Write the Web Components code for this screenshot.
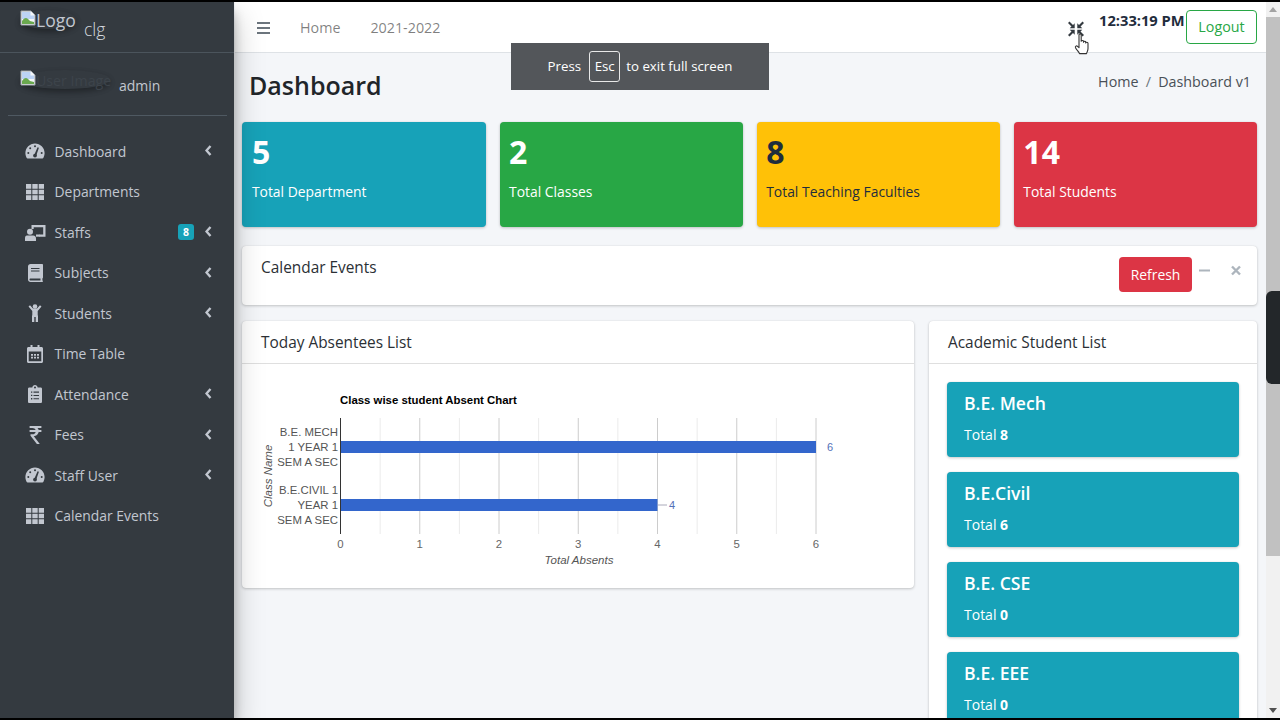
<!DOCTYPE html>
<html>
<head>
<meta charset="utf-8">
<title>Dashboard</title>
<style>
    html, body { margin: 0; height: 100%; background: #000; overflow: hidden; }
    body { font-family: "Open Sans", "Noto Sans", sans-serif; font-size: 13.9px; color: #212529; }
</style>
</head>
<body>
<admin-app>
    <side-bar slot="side">
        <nav-item icon="gauge" arrow>Dashboard</nav-item>
        <nav-item icon="grid">Departments</nav-item>
        <nav-item icon="teacher" badge="8" arrow>Staffs</nav-item>
        <nav-item icon="book" arrow>Subjects</nav-item>
        <nav-item icon="child" arrow>Students</nav-item>
        <nav-item icon="calendar">Time Table</nav-item>
        <nav-item icon="clipboard" arrow>Attendance</nav-item>
        <nav-item icon="rupee" arrow>Fees</nav-item>
        <nav-item icon="gauge" arrow>Staff User</nav-item>
        <nav-item icon="grid">Calendar Events</nav-item>
    </side-bar>

    <top-bar slot="top"></top-bar>
    <page-title slot="top"></page-title>

    <stat-row>
        <small-box value="5" color="#17a2b8">Total Department</small-box>
        <small-box value="2" color="#28a745">Total Classes</small-box>
        <small-box value="8" color="#ffc107" ink="#1f2d3d">Total Teaching Faculties</small-box>
        <small-box value="14" color="#dc3545">Total Students</small-box>
    </stat-row>

    <events-card></events-card>

    <two-cols>
        <card-box heading="Today Absentees List"><absent-chart></absent-chart></card-box>
        <card-box heading="Academic Student List" pad>
            <class-tile total="8">B.E. Mech</class-tile>
            <class-tile total="6">B.E.Civil</class-tile>
            <class-tile total="0">B.E. CSE</class-tile>
            <class-tile total="0">B.E. EEE</class-tile>
        </card-box>
    </two-cols>
</admin-app>

<script>
// broken image glyph the browser draws for the missing logo and user picture
const BROKEN_IMG = `<svg width="16" height="16" viewBox="0 0 16 16">
    <path d="M1 1h10l4 4v10H1z" fill="#f4f6f8" stroke="#9aa0a6" stroke-width="1"/>
    <path d="M2 2h8.5v3.5H14V9L2 9z" fill="#bcd3f5"/>
    <path d="M2 14V11c2-3 4-4 6-2l2 2 4 1v2z" fill="#6aa84f"/>
</svg>`;

const NAV_ICONS = {
    gauge: `<svg width="20" height="18" viewBox="0 0 20 18">
        <path fill="currentColor" d="M10 1.5C4.7 1.5.4 5.8.4 11.1c0 1.8.5 3.4 1.3 4.8.2.3.5.5.8.5h15c.3 0 .6-.2.8-.5.8-1.4 1.3-3 1.3-4.8C19.6 5.8 15.3 1.5 10 1.5z"/>
        <g fill="#343a40"><circle cx="10" cy="4.2" r="1"/><circle cx="5.2" cy="6.2" r="1"/><circle cx="3.3" cy="11" r="1"/><circle cx="16.7" cy="11" r="1"/><circle cx="10" cy="13.6" r="1.9"/><path d="M9.3 12.8 12.6 5.3l1.3.5-2.6 7.7z"/></g>
    </svg>`,
    grid: `<svg width="18" height="16" viewBox="0 0 18 16"><path fill="currentColor" d="M0 0h5.3v4.7H0zM6.3 0h5.4v4.7H6.3zM12.7 0H18v4.7h-5.3zM0 5.7h5.3v4.6H0zM6.3 5.7h5.4v4.6H6.3zM12.7 5.7H18v4.6h-5.3zM0 11.3h5.3V16H0zM6.3 11.3h5.400V16H6.3zM12.7 11.3H18V16h-5.3z"/></svg>`,
    teacher: `<svg width="21" height="17" viewBox="0 0 21 17"><path fill="currentColor" d="M6.5 1H20.5v11.7H14v-2.2h4.2V3.2H8.7v1.8H6.5z"/><path fill="currentColor" d="M11 10.500h3.500v2.200H11z"/><circle fill="currentColor" cx="5" cy="7.800" r="3"/><path fill="currentColor" d="M1.800 11.500h6.500c1.500 0 2.700 1.200 2.700 2.700V17H0v-3c0-1.200.8-2.500 1.800-2.500z"/></svg>`,
    book: `<svg width="15" height="18" viewBox="0 0 15 18"><path fill="currentColor" fill-rule="evenodd" d="M2.500 0H14c.6 0 1 .4 1 1v12.500c0 .5-.3.800-.6 1v1.900c.4.100.6.500.6.800 0 .4-.4.800-.8.800H2.500C1.100 18 0 16.900 0 15.500v-13C0 1.100 1.100 0 2.500 0zM3 4v1h8.500V4zm0 2.500v1h8.500v-1zM2.500 14.500c-.6 0-1 .4-1 1s.4 1 1 1h10v-2z"/></svg>`,
    child: `<svg width="14" height="18" viewBox="0 0 14 18"><circle fill="currentColor" cx="7" cy="2.500" r="2.300"/><path fill="currentColor" d="M.5 2.500 2 1.300l3 3.200h4L12 1.300l1.500 1.200L9.700 7v4.500h.3V18H7.700v-5H6.300v5H4v-6.500h.3V7z"/></svg>`,
    calendar: `<svg width="16" height="18" viewBox="0 0 16 18"><path fill="currentColor" fill-rule="evenodd" d="M3.500 0h2v2h5V0h2v2h2c.800 0 1.500.700 1.500 1.500v13c0 .8-.7 1.500-1.500 1.500h-13C.7 18 0 17.300 0 16.500v-13C0 2.700.7 2 1.500 2h2zM1.700 6.500v9.700h12.600V6.500zM4 9h2v1.700H4zm3 0h2v1.700H7zm3 0h2v1.700h-2zM4 11.800h2v1.700H4zm3 0h2v1.700H7zm3 0h2v1.700h-2z"/></svg>`,
    clipboard: `<svg width="14" height="18" viewBox="0 0 14 18"><path fill="currentColor" fill-rule="evenodd" d="M1.300 2.400h3C4.500 1.100 5.600 0 7 0s2.500 1.100 2.700 2.400h3c.7 0 1.300.6 1.300 1.300v13c0 .7-.6 1.300-1.300 1.300H1.300C.6 18 0 17.400 0 16.700v-13c0-.7.6-1.300 1.300-1.300zM3 6.500v1.300h1.300V6.500zm2.500.1v1.100H11V6.600zM3 9.800v1.300h1.300V9.800zm2.500.1V11H11V9.900zM3 13.100v1.300h1.300v-1.300zm2.500.1v1.100H11v-1.100zM7 1.400a1 1 0 1 0 0 2 1 1 0 0 0 0-2z"/></svg>`,
    rupee: `<svg width="13" height="18" viewBox="0 0 13 18"><path fill="currentColor" d="M.6 0h11.800v2H8.500c.6.600 1 1.300 1.200 2h2.700v2H9.700c-.5 2.300-2.400 4-4.900 4.300L10.800 18H7.900L1.500 9.700V8.300h2c1.500 0 2.700-.9 3.200-2.300H.6V4h6.100C6.200 2.700 5 2 3.500 2H.6z"/></svg>`
};

class AdminApp extends HTMLElement {
    constructor() {
        super();
        this.attachShadow({ mode: 'open' });
        this.shadowRoot.innerHTML = `
            <style>
                :host {
                    display: grid;
                    grid-template-columns: 235px 1fr 14px;
                    height: 716px;
                    margin: 2px 0;
                    position: relative;
                    background: #f4f6f9;
                    overflow: hidden;
                }
                main { overflow: hidden; min-width: 0; display: flex; flex-direction: column; }
                #content { padding: 0 9px 0 7px; }
            </style>
            <slot name="side"></slot>
            <main>
                <slot name="top"></slot>
                <div id="content"><slot></slot></div>
            </main>
            <fake-scrollbar></fake-scrollbar>
            <fullscreen-toast></fullscreen-toast>
            <hand-cursor></hand-cursor>
        `;
    }
}

class SideBar extends HTMLElement {
    constructor() {
        super();
        this.attachShadow({ mode: 'open' });
        this.shadowRoot.innerHTML = `
            <style>
                :host {
                    display: block;
                    background: #343a40;
                    width: 234px;
                    color: #c2c7d0;
                    box-shadow: 0 14px 28px rgba(0,0,0,.25), 0 10px 10px rgba(0,0,0,.22);
                    position: relative;
                    z-index: 2;
                }
                #brand { height: 51px; box-sizing: border-box; border-bottom: 1px solid #4b545c; display: flex; padding: 8px 0 0 20px; }
                #logo { display: flex; align-items: flex-start; height: 19px; font-size: 17.5px; line-height: 19px; width: 56px; border-radius: 50%; box-shadow: 0 3px 6px rgba(0,0,0,.16), 0 3px 6px rgba(0,0,0,.23); }
                #logo span { margin-top: 1px; }
                #clg { font-size: 17.5px; font-weight: 300; color: #d5d9df; margin: 9px 0 0 8px; line-height: 20px; }
                #user { margin: 0 7px 0 8px; height: 63px; box-sizing: border-box; border-bottom: 1px solid #4f5962; display: flex; padding: 17px 0 0 12px; }
                #pic { width: 90px; height: 19px; display: flex; border-radius: 50%; color: #3d444b; font-size: 14.2px; line-height: 21px; box-shadow: 0 3px 6px rgba(0,0,0,.16), 0 3px 6px rgba(0,0,0,.23); white-space: nowrap; }
                #admin { margin-left: 9px; font-size: 14px; line-height: 29px; margin-top: 1px; }
                nav { padding-top: 15px; }
                svg { flex: none; }
            </style>
            <div id="brand">
                <div id="logo">${BROKEN_IMG}<span>Logo</span></div>
                <div id="clg">clg</div>
            </div>
            <div id="user">
                <div id="pic">${BROKEN_IMG}<span>User Image</span></div>
                <div id="admin">admin</div>
            </div>
            <nav><slot></slot></nav>
        `;
    }
}

class NavItem extends HTMLElement {
    constructor() {
        super();
        this.attachShadow({ mode: 'open' });
        const badge = this.getAttribute('badge');
        const arrow = this.hasAttribute('arrow');
        this.shadowRoot.innerHTML = `
            <style>
                :host {
                    display: flex;
                    align-items: center;
                    height: 40.5px;
                    padding-left: 24.5px;
                    color: #c2c7d0;
                    position: relative;
                }
                #ic { width: 21px; display: flex; justify-content: center; margin-right: 9px; }
                #badge {
                    position: absolute; left: 178px; top: 12px;
                    width: 16px; height: 16px; border-radius: 3px;
                    background: #17a2b8; color: #fff;
                    font-size: 10.5px; font-weight: 700; line-height: 16px; text-align: center;
                }
                #arrow { position: absolute; left: 205px; top: 14px; }
            </style>
            <span id="ic">${NAV_ICONS[this.getAttribute('icon')]}</span>
            <slot></slot>
            ${badge ? `<span id="badge">${badge}</span>` : ''}
            ${arrow ? `<svg id="arrow" width="7" height="11" viewBox="0 0 7 11"><path d="M5.500 1 1.500 5.500l4 4.500" fill="none" stroke="currentColor" stroke-width="2.400"/></svg>` : ''}
        `;
    }
}

class TopBar extends HTMLElement {
    constructor() {
        super();
        this.attachShadow({ mode: 'open' });
        this.shadowRoot.innerHTML = `
            <style>
                :host {
                    display: flex;
                    height: 51px;
                    box-sizing: border-box;
                    background: #fff;
                    border-bottom: 1px solid #dee2e6;
                    padding: 8px 9px 0 22px;
                    flex: none;
                    font-size: 14.3px;
                }
                #menu { margin-top: 12px; }
                a { color: rgba(0,0,0,.5); margin-top: 7px; line-height: 22px; }
                #home { margin-left: 30px; }
                #year { margin-left: 30px; }
                #compress { margin: 11px 15px 0 auto; }
                #clock { font-weight: 700; font-size: 14.7px; color: #1f2d3d; line-height: 21px; width: 87px; white-space: nowrap; }
                #logout {
                    width: 71px; height: 34px; box-sizing: border-box;
                    border: 1px solid #28a745; border-radius: 4px;
                    color: #28a745; text-align: center; line-height: 32px;
                }
            </style>
            <svg id="menu" width="13" height="12" viewBox="0 0 13 12"><path d="M0 0h13v2H0zM0 5h13v2H0zM0 10h13v2H0z" fill="#6c757d"/></svg>
            <a id="home">Home</a>
            <a id="year">2021-2022</a>
            <svg id="compress" width="16" height="16" viewBox="0 0 16 16"><path fill="#343a40" d="M1.500 .5 5 4l1.700-1.700V7.300H1.700L3.500 5.500 0 2zM14.500 .5 16 2l-3.500 3.500 1.800 1.800H9.300V2.300L11 4zM1.700 8.700h5v5L5 12l-3.500 3.500L0 14l3.500-3.500zM9.300 8.700h5l-1.800 1.800L16 14l-1.500 1.500L11 12l-1.700 1.700z"/></svg>
            <div id="clock">12:33:19 PM</div>
            <div id="logout">Logout</div>
        `;
    }
}

class PageTitle extends HTMLElement {
    constructor() {
        super();
        this.attachShadow({ mode: 'open' });
        this.shadowRoot.innerHTML = `
            <style>
                :host { display: flex; justify-content: space-between; height: 69px; padding: 0 15px 0 14px; flex: none; }
                h1 { margin: 14px 0 0; font-size: 25px; font-weight: 600; line-height: 36px; color: #212529; }
                #crumb { margin-top: 17px; font-size: 14.3px; line-height: 23px; color: #495057; }
                i { font-style: normal; color: #6c757d; margin: 0 3.5px; }
            </style>
            <h1>Dashboard</h1>
            <div id="crumb">Home<i> / </i>Dashboard v1</div>
        `;
    }
}

class StatRow extends HTMLElement {
    constructor() {
        super();
        this.attachShadow({ mode: 'open' });
        this.shadowRoot.innerHTML = `
            <style>:host { display: grid; grid-template-columns: repeat(4, 1fr); gap: 14px; margin: 0 0 19px .4px; }</style>
            <slot></slot>
        `;
    }
}

class SmallBox extends HTMLElement {
    constructor() {
        super();
        this.attachShadow({ mode: 'open' });
        this.shadowRoot.innerHTML = `
            <style>
                :host {
                    display: block;
                    height: 105px;
                    box-sizing: border-box;
                    padding: 10px 9.5px;
                    border-radius: 4px;
                    background: ${this.getAttribute('color')};
                    color: ${this.getAttribute('ink') || '#fff'};
                    box-shadow: 0 0 1px rgba(0,0,0,.125), 0 1px 3px rgba(0,0,0,.2);
                }
                b { display: block; font-size: 32px; line-height: 40px; }
                p { margin: 10px 0 0; line-height: 20px; }
            </style>
            <b>${this.getAttribute('value')}</b>
            <p><slot></slot></p>
        `;
    }
}

class EventsCard extends HTMLElement {
    constructor() {
        super();
        this.attachShadow({ mode: 'open' });
        this.shadowRoot.innerHTML = `
            <style>
                :host {
                    display: flex;
                    height: 59px;
                    box-sizing: border-box;
                    background: #fff;
                    border-radius: 4px;
                    box-shadow: 0 0 1px rgba(0,0,0,.125), 0 1px 3px rgba(0,0,0,.2);
                    margin-bottom: 16px;
                    padding: 11px 16px 0 19px;
                }
                h3 { margin: 0; font-size: 15.4px; font-weight: 400; line-height: 22px; color: #2b3035; }
                button {
                    margin-left: auto; width: 73px; height: 35px;
                    background: #dc3545; color: #fff; border: 0; border-radius: 4px;
                    font: inherit; padding: 0;
                }
                svg { flex: none; margin-top: 8px; }
            </style>
            <h3>Calendar Events</h3>
            <button>Refresh</button>
            <svg style="margin-left:7px" width="11" height="11" viewBox="0 0 11 11"><path d="M0 4.500h11v2H0z" fill="#adb5bd"/></svg>
            <svg style="margin-left:21px" width="10" height="11" viewBox="0 0 10 11"><path d="M1 1.500l8 8M9 1.500l-8 8" stroke="#adb5bd" stroke-width="2.400" fill="none"/></svg>
        `;
    }
}

class TwoCols extends HTMLElement {
    constructor() {
        super();
        this.attachShadow({ mode: 'open' });
        this.shadowRoot.innerHTML = `
            <style>:host { display: grid; grid-template-columns: 672px 1fr; gap: 15px; align-items: start; }</style>
            <slot></slot>
        `;
    }
}

class CardBox extends HTMLElement {
    constructor() {
        super();
        this.attachShadow({ mode: 'open' });
        this.shadowRoot.innerHTML = `
            <style>
                :host {
                    display: block;
                    background: #fff;
                    border-radius: 4px;
                    box-shadow: 0 0 1px rgba(0,0,0,.125), 0 1px 3px rgba(0,0,0,.2);
                }
                h3 {
                    margin: 0; height: 43px; box-sizing: border-box;
                    padding: 11px 19px 0;
                    border-bottom: 1px solid rgba(0,0,0,.125);
                    font-size: 15.4px; font-weight: 400; line-height: 22px; color: #2b3035;
                }
                #body { padding: ${this.hasAttribute('pad') ? '18px 18px 0' : '0'}; }
            </style>
            <h3>${this.getAttribute('heading')}</h3>
            <div id="body"><slot></slot></div>
        `;
    }
}

class ClassTile extends HTMLElement {
    constructor() {
        super();
        this.attachShadow({ mode: 'open' });
        this.shadowRoot.innerHTML = `
            <style>
                :host {
                    display: block;
                    height: 75px;
                    box-sizing: border-box;
                    margin-bottom: 15px;
                    padding: 10px 17px;
                    background: #17a2b8;
                    color: #fff;
                    border-radius: 4px;
                    font-size: 14px;
                    box-shadow: 0 0 1px rgba(0,0,0,.125), 0 1px 3px rgba(0,0,0,.2);
                }
                h4 { margin: 0; font-size: 17.6px; font-weight: 600; line-height: 23px; }
                p { margin: 10px 0 0; line-height: 20px; }
                b { font-weight: 700; }
            </style>
            <h4><slot></slot></h4>
            <p>Total <b>${this.getAttribute('total')}</b></p>
        `;
    }
}

class AbsentChart extends HTMLElement {
    constructor() {
        super();
        this.attachShadow({ mode: 'open' });
        const x0 = 340.5, unit = 79.25;
        let grid = '', ticks = '';
        for (let i = 1; i <= 12; i++) {
            const x = x0 + i * unit / 2;
            grid += `<line x1="${x}" x2="${x}" y1="418" y2="534" stroke="${i % 2 ? '#ebebeb' : '#cccccc'}"/>`;
        }
        for (let i = 0; i <= 6; i++) {
            ticks += `<text x="${x0 + i * unit}" y="548" text-anchor="middle" fill="#666">${i}</text>`;
        }
        // y label blocks are right aligned against the axis like the google chart
        const labels = [[436, 'B.E. MECH'], [451, '1 YEAR 1'], [466, 'SEM A SEC'], [494, 'B.E.CIVIL 1'], [509, 'YEAR 1'], [524, 'SEM A SEC']]
            .map(([y, t]) => `<text x="338" y="${y}" text-anchor="end">${t}</text>`).join('');
        this.shadowRoot.innerHTML = `
            <style>
                :host { display: block; height: 224px; }
                svg { display: block; font-family: "Liberation Sans", Arial, sans-serif; font-size: 11.4px; fill: #555; }
            </style>
            <svg width="672" height="224" viewBox="242 364 672 224">
                <text x="340" y="404" font-weight="700" fill="#000">Class wise student Absent Chart</text>
                ${grid}
                <rect x="${x0}" y="441" width="${6 * unit}" height="12" fill="#3366cc"/>
                <rect x="${x0}" y="499" width="${4 * unit}" height="12" fill="#3366cc"/>
                <line x1="${x0}" x2="${x0}" y1="418" y2="534" stroke="#333"/>
                ${labels}
                ${ticks}
                <text x="827" y="451" fill="#5470b8" font-size="11">6</text>
                <line x1="658" x2="667" y1="505" y2="505" stroke="#aab"/>
                <text x="669" y="509" fill="#5470b8" font-size="11">4</text>
                <text x="579" y="564" text-anchor="middle" font-style="italic" font-size="11.5">Total Absents</text>
                <text transform="translate(272 476) rotate(-90)" text-anchor="middle" font-style="italic" font-size="11.5">Class Name</text>
            </svg>
        `;
    }
}

class FakeScrollbar extends HTMLElement {
    constructor() {
        super();
        this.attachShadow({ mode: 'open' });
        this.shadowRoot.innerHTML = `
            <style>
                :host { display: block; background: #f1f1f1; position: relative; z-index: 3; }
                #thumb { position: absolute; left: 0; right: 0; top: 15px; height: 539px; background: #c1c1c1; }
                #dock { position: absolute; left: 0; right: 0; top: 289px; height: 93px; background: #23272a; border-radius: 6px 0 0 6px; }
                svg { position: absolute; left: 3px; }
            </style>
            <svg style="top:5px" width="8" height="5" viewBox="0 0 8 5"><path d="M4 0l4 5H0z" fill="#a3a3a3"/></svg>
            <div id="thumb"></div>
            <div id="dock"></div>
            <svg style="bottom:5px" width="8" height="5" viewBox="0 0 8 5"><path d="M0 0h8L4 5z" fill="#505050"/></svg>
        `;
    }
}

class FullscreenToast extends HTMLElement {
    constructor() {
        super();
        this.attachShadow({ mode: 'open' });
        this.shadowRoot.innerHTML = `
            <style>
                :host {
                    position: absolute; left: 511px; top: 41px;
                    width: 258px; height: 47px;
                    box-sizing: border-box;
                    padding-bottom: 1px;
                    z-index: 4;
                    display: flex; align-items: center; justify-content: center;
                    background: #53565a; color: #fff;
                    font-size: 13.3px;
                }
                kbd {
                    font: inherit;
                    box-sizing: border-box;
                    border: 1px solid #e8e8e8; border-radius: 3px;
                    height: 31px; width: 31px; line-height: 29px; text-align: center;
                    margin: 0 6px 0 8px;
                }
            </style>
            Press <kbd>Esc</kbd> to exit full screen
        `;
    }
}

class HandCursor extends HTMLElement {
    constructor() {
        super();
        this.attachShadow({ mode: 'open' });
        this.shadowRoot.innerHTML = `
            <style>:host { position: absolute; left: 1074px; top: 31px; z-index: 5; width: 17px; height: 22px; }</style>
            <svg width="17" height="22" viewBox="0 0 17 24" preserveAspectRatio="none">
                <path d="M5 2c0-1.300 2.200-1.300 2.200 0v7c0-1.200 2.300-1.200 2.300 0v1c0-1.200 2.200-1.200 2.200 0v1c0-1.200 2.300-1 2.300.3v5.700c0 2.500-1 3.500-1.500 5.500H5.500c-.7-2-2.500-3.500-4-6.500-.6-1.500 1-2.500 2-1.500L5 16z" fill="#fff" stroke="#333" stroke-width="1.100" stroke-linejoin="round"/>
            </svg>
        `;
    }
}

customElements.define('admin-app', AdminApp);
customElements.define('side-bar', SideBar);
customElements.define('nav-item', NavItem);
customElements.define('top-bar', TopBar);
customElements.define('page-title', PageTitle);
customElements.define('stat-row', StatRow);
customElements.define('small-box', SmallBox);
customElements.define('events-card', EventsCard);
customElements.define('two-cols', TwoCols);
customElements.define('card-box', CardBox);
customElements.define('class-tile', ClassTile);
customElements.define('absent-chart', AbsentChart);
customElements.define('fake-scrollbar', FakeScrollbar);
customElements.define('fullscreen-toast', FullscreenToast);
customElements.define('hand-cursor', HandCursor);
</script>
</body>
</html>
